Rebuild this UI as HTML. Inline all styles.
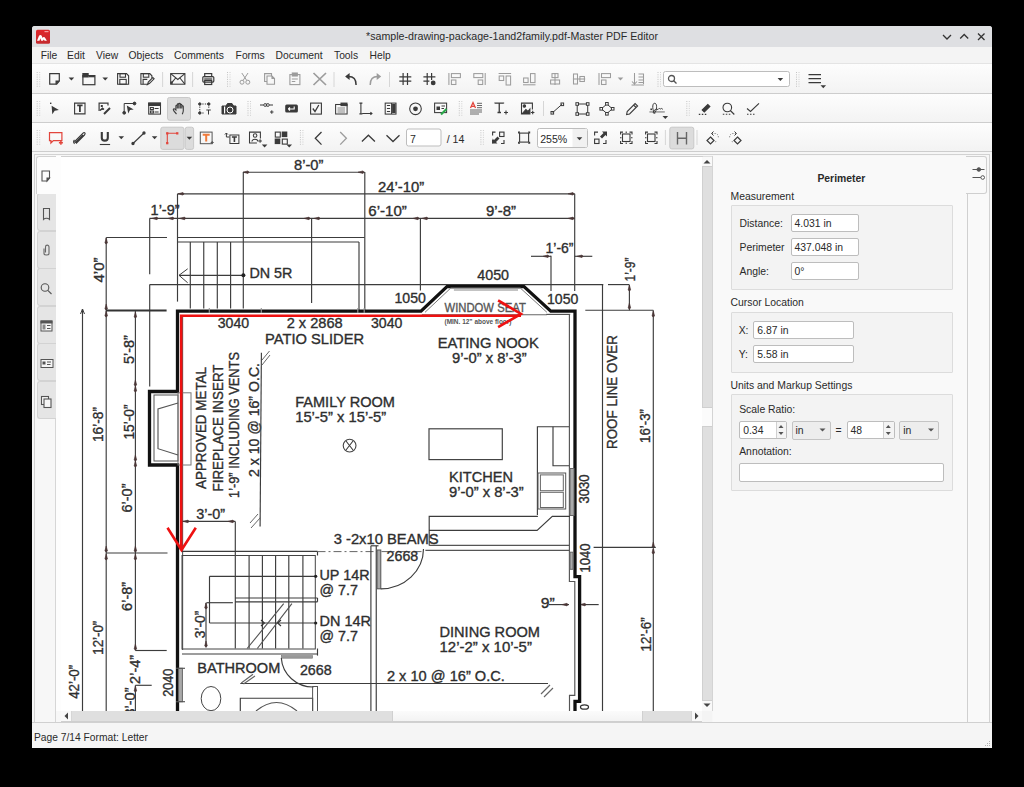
<!DOCTYPE html>
<html><head><meta charset="utf-8">
<style>
*{margin:0;padding:0;box-sizing:border-box}
html,body{width:1024px;height:787px;background:#000;overflow:hidden;font-family:"Liberation Sans",sans-serif;color:#222}
.a{position:absolute}
#win{position:absolute;left:32px;top:26px;width:960px;height:722px;background:#f4f4f4;border-radius:3px 3px 0 0;overflow:hidden}
#title{left:0;top:0;width:960px;height:21px;background:#dedfe2}
#title .t{left:0;width:960px;top:4px;text-align:center;font-size:10.65px;color:#2a2a2a}
#menu{left:0;top:21px;width:960px;height:17px;background:#f4f4f4;border-bottom:1px solid #e4e4e4}
#menu span{position:absolute;top:3px;font-size:10.3px;color:#2a2a2a}
.tb{left:0;width:960px;height:29px;background:linear-gradient(#fdfdfd,#f3f3f3);border-bottom:1px solid #cdcdcd}
#main{left:0;top:126px;width:960px;height:596px;background:#f6f6f6}
#status{left:0;top:696px;width:960px;height:26px;background:#f5f5f5;border-top:1px solid #d0d0d0}
#status span{position:absolute;left:2px;top:8.5px;font-size:10.25px;color:#2a2a2a}
.tab{position:absolute;left:5px;width:18.5px;height:38px;background:#e5e5e5;border:1px solid #d3d3d3;border-right:none;border-radius:3px 0 0 3px}
.lbl{position:absolute;font-size:10.4px;color:#2a2a2a;white-space:nowrap;margin-top:0.6px}
.inp{position:absolute;background:#fff;border:1px solid #bdbdbd;border-radius:2px;font-size:10.4px;color:#2a2a2a;padding-left:3px;padding-top:1px;line-height:15px}
.grp{position:absolute;border:1px solid #dcdcdc;background:#f3f3f3;border-radius:1px}
</style></head><body>
<div id="win">
  <div id="title" class="a"><div class="t a">*sample-drawing-package-1and2family.pdf-Master PDF Editor</div></div>
  <div id="menu" class="a">
    <span style="left:8.7px">File</span><span style="left:35.1px">Edit</span><span style="left:64px">View</span><span style="left:96.6px">Objects</span><span style="left:142px">Comments</span><span style="left:203.6px">Forms</span><span style="left:243.6px">Document</span><span style="left:302px">Tools</span><span style="left:337.5px">Help</span>
  </div>
  <div class="tb a" style="top:38px;height:30px"></div>
  <div class="tb a" style="top:68px"></div>
  <div class="tb a" style="top:97px"></div>
  <div id="main" class="a">
  </div>
  <div id="status" class="a"><span>Page 7/14 Format: Letter</span></div>
</div>
<!-- main area in screen coords -->
<div class="a" style="left:34px;top:154px;width:956px;height:568px;border:1px solid #d2d2d2;border-bottom:none;background:#f7f7f7"></div>
<!-- left tabs -->
<div class="a" style="left:56px;top:156px;width:6px;height:555px;background:#fdfdfd"></div>
<div class="tab" style="left:37px;top:193px"></div>
<div class="tab" style="left:37px;top:230.5px"></div>
<div class="tab" style="left:37px;top:268px"></div>
<div class="tab" style="left:37px;top:305.5px"></div>
<div class="tab" style="left:37px;top:343px"></div>
<div class="tab" style="left:37px;top:380.5px"></div>
<div class="a" style="left:36px;top:156px;width:20px;height:37.5px;background:#fdfdfd;border:1px solid #d2d2d2;border-right:none;border-bottom:none;border-radius:3px 0 0 0"></div>
<div class="a" style="left:55px;top:419px;width:1px;height:303px;background:#d6d6d6"></div>
<!-- page viewport -->
<div class="a" style="left:61px;top:157px;width:641px;height:554px;background:#fff;overflow:hidden">
  <svg id="plan" class="a" style="left:-61px;top:-157px" width="1024" height="787"><g font-family="Liberation Sans, sans-serif"><line x1="243.3" y1="172.2" x2="364.8" y2="172.2" stroke="#3c3c3c" stroke-width="1.15"/>
<path d="M243 172.2 L248 170.89999999999998 L249 172.2 L248 173.5Z" fill="#4a3636" stroke="#4a3636" stroke-width="0.6"/>
<path d="M358 172.2 L363 170.89999999999998 L364 172.2 L363 173.5Z" fill="#4a3636" stroke="#4a3636" stroke-width="0.6"/>
<text x="294" y="170.2" text-anchor="start" font-size="14.6" fill="#2e2e2e" stroke="#2e2e2e" stroke-width="0.35" textLength="29.4" lengthAdjust="spacingAndGlyphs">8&#8217;-0&#8221;</text>
<line x1="243.3" y1="172" x2="243.3" y2="308.6" stroke="#3c3c3c" stroke-width="1.15"/>
<line x1="364.8" y1="172" x2="364.8" y2="237.5" stroke="#3c3c3c" stroke-width="1.15"/>
<line x1="177.5" y1="193.8" x2="574.7" y2="193.8" stroke="#3c3c3c" stroke-width="1.15"/>
<path d="M178 193.8 L183 192.5 L184 193.8 L183 195.10000000000002Z" fill="#4a3636" stroke="#4a3636" stroke-width="0.6"/>
<path d="M568 193.8 L573 192.5 L574 193.8 L573 195.10000000000002Z" fill="#4a3636" stroke="#4a3636" stroke-width="0.6"/>
<text x="378" y="191.7" text-anchor="start" font-size="14.6" fill="#2e2e2e" stroke="#2e2e2e" stroke-width="0.35" textLength="46.3" lengthAdjust="spacingAndGlyphs">24&#8217;-10&#8221;</text>
<line x1="177.5" y1="193.8" x2="177.5" y2="301.6" stroke="#3c3c3c" stroke-width="1.15"/>
<line x1="574.7" y1="193.8" x2="574.7" y2="291" stroke="#3c3c3c" stroke-width="1.15"/>
<line x1="149.5" y1="218.4" x2="574.7" y2="218.4" stroke="#3c3c3c" stroke-width="1.15"/>
<path d="M152 218.4 L157 217.1 L158 218.4 L157 219.70000000000002Z" fill="#4a3636" stroke="#4a3636" stroke-width="0.6"/>
<path d="M168 218.4 L173 217.1 L174 218.4 L173 219.70000000000002Z" fill="#4a3636" stroke="#4a3636" stroke-width="0.6"/>
<path d="M179.6 218.4 L184.6 217.1 L185.6 218.4 L184.6 219.70000000000002Z" fill="#4a3636" stroke="#4a3636" stroke-width="0.6"/>
<path d="M304 218.4 L309 217.1 L310 218.4 L309 219.70000000000002Z" fill="#4a3636" stroke="#4a3636" stroke-width="0.6"/>
<path d="M314 218.4 L319 217.1 L320 218.4 L319 219.70000000000002Z" fill="#4a3636" stroke="#4a3636" stroke-width="0.6"/>
<path d="M413 218.4 L418 217.1 L419 218.4 L418 219.70000000000002Z" fill="#4a3636" stroke="#4a3636" stroke-width="0.6"/>
<path d="M422 218.4 L427 217.1 L428 218.4 L427 219.70000000000002Z" fill="#4a3636" stroke="#4a3636" stroke-width="0.6"/>
<path d="M568 218.4 L573 217.1 L574 218.4 L573 219.70000000000002Z" fill="#4a3636" stroke="#4a3636" stroke-width="0.6"/>
<text x="150.6" y="215.2" text-anchor="start" font-size="14.6" fill="#2e2e2e" stroke="#2e2e2e" stroke-width="0.35" textLength="29" lengthAdjust="spacingAndGlyphs">1&#8217;-9&#8221;</text>
<text x="368.3" y="215.5" text-anchor="start" font-size="14.6" fill="#2e2e2e" stroke="#2e2e2e" stroke-width="0.35" textLength="38.5" lengthAdjust="spacingAndGlyphs">6&#8217;-10&#8221;</text>
<text x="486" y="215.5" text-anchor="start" font-size="14.6" fill="#2e2e2e" stroke="#2e2e2e" stroke-width="0.35" textLength="30" lengthAdjust="spacingAndGlyphs">9&#8217;-8&#8221;</text>
<line x1="149.7" y1="218.4" x2="149.7" y2="274.2" stroke="#3c3c3c" stroke-width="1.15"/>
<line x1="149.7" y1="284.5" x2="149.7" y2="386.4" stroke="#3c3c3c" stroke-width="1.15"/>
<line x1="311.6" y1="218.4" x2="311.6" y2="303" stroke="#3c3c3c" stroke-width="1.15"/>
<line x1="420.4" y1="218.4" x2="420.4" y2="290.5" stroke="#3c3c3c" stroke-width="1.15"/>
<line x1="531" y1="256.3" x2="551" y2="256.3" stroke="#3c3c3c" stroke-width="1.15"/>
<line x1="574.7" y1="256.3" x2="592.3" y2="256.3" stroke="#3c3c3c" stroke-width="1.15"/>
<path d="M543 256.3 L548 255.0 L549 256.3 L548 257.6Z" fill="#4a3636" stroke="#4a3636" stroke-width="0.6"/>
<path d="M577 256.3 L582 255.0 L583 256.3 L582 257.6Z" fill="#4a3636" stroke="#4a3636" stroke-width="0.6"/>
<text x="545.5" y="253.1" text-anchor="start" font-size="14.6" fill="#2e2e2e" stroke="#2e2e2e" stroke-width="0.35" textLength="28" lengthAdjust="spacingAndGlyphs">1&#8217;-6&#8221;</text>
<line x1="551" y1="255.8" x2="551" y2="291" stroke="#3c3c3c" stroke-width="1.15"/>
<line x1="149.7" y1="284.6" x2="603.3" y2="284.6" stroke="#3c3c3c" stroke-width="1.15"/>
<line x1="608" y1="284.6" x2="629" y2="284.6" stroke="#3c3c3c" stroke-width="1.15"/>
<line x1="602.5" y1="284.6" x2="602.5" y2="711" stroke="#3c3c3c" stroke-width="1.15"/>
<line x1="629.4" y1="284.6" x2="629.4" y2="310.2" stroke="#3c3c3c" stroke-width="1.15"/>
<path d="M629.4 285 L628.1 290 L629.4 291 L630.6999999999999 290Z" fill="#4a3636" stroke="#4a3636" stroke-width="0.6"/>
<path d="M629.4 303 L628.1 308 L629.4 309 L630.6999999999999 308Z" fill="#4a3636" stroke="#4a3636" stroke-width="0.6"/>
<text transform="translate(635,269.5) rotate(-90)" text-anchor="middle" font-size="14.6" fill="#2e2e2e" stroke="#2e2e2e" stroke-width="0.35" textLength="24" lengthAdjust="spacingAndGlyphs">1&#8217;-9&#8221;</text>
<line x1="585.3" y1="310.2" x2="653.3" y2="310.2" stroke="#3c3c3c" stroke-width="1.15"/>
<line x1="653.3" y1="310.2" x2="653.3" y2="547.4" stroke="#3c3c3c" stroke-width="1.15"/>
<line x1="653.3" y1="549" x2="653.3" y2="711" stroke="#3c3c3c" stroke-width="1.15"/>
<path d="M653.3 311 L652.0 316 L653.3 317 L654.5999999999999 316Z" fill="#4a3636" stroke="#4a3636" stroke-width="0.6"/>
<path d="M653.3 542 L652.0 547 L653.3 548 L654.5999999999999 547Z" fill="#4a3636" stroke="#4a3636" stroke-width="0.6"/>
<path d="M653.3 548 L652.0 553 L653.3 554 L654.5999999999999 553Z" fill="#4a3636" stroke="#4a3636" stroke-width="0.6"/>
<line x1="593.6" y1="547.4" x2="655.8" y2="547.4" stroke="#3c3c3c" stroke-width="1.15"/>
<text transform="translate(617,392) rotate(-90)" text-anchor="middle" font-size="14.6" fill="#2e2e2e" stroke="#2e2e2e" stroke-width="0.35" textLength="114" lengthAdjust="spacingAndGlyphs">ROOF LINE OVER</text>
<text transform="translate(650.2,426) rotate(-90)" text-anchor="middle" font-size="14.6" fill="#2e2e2e" stroke="#2e2e2e" stroke-width="0.35" textLength="34" lengthAdjust="spacingAndGlyphs">16&#8217;-3&#8221;</text>
<text transform="translate(650.7,634.4) rotate(-90)" text-anchor="middle" font-size="14.6" fill="#2e2e2e" stroke="#2e2e2e" stroke-width="0.35" textLength="34" lengthAdjust="spacingAndGlyphs">12&#8217;-6&#8221;</text>
<line x1="585" y1="604.6" x2="598.7" y2="604.6" stroke="#3c3c3c" stroke-width="1.15"/>
<path d="M580 604.6 L585 603.3000000000001 L586 604.6 L585 605.9Z" fill="#4a3636" stroke="#4a3636" stroke-width="0.6"/>
<line x1="549" y1="604.6" x2="569" y2="604.6" stroke="#3c3c3c" stroke-width="1.15"/>
<path d="M562 604.6 L567 603.3000000000001 L568 604.6 L567 605.9Z" fill="#4a3636" stroke="#4a3636" stroke-width="0.6"/>
<text x="547.8" y="607.5" text-anchor="middle" font-size="14.6" fill="#2e2e2e" stroke="#2e2e2e" stroke-width="0.35" textLength="14" lengthAdjust="spacingAndGlyphs">9&#8221;</text>
<line x1="106.2" y1="237.5" x2="167" y2="237.5" stroke="#3c3c3c" stroke-width="1.15"/>
<line x1="106.2" y1="237.5" x2="106.2" y2="711" stroke="#3c3c3c" stroke-width="1.15"/>
<path d="M106.2 238 L104.9 243 L106.2 244 L107.5 243Z" fill="#4a3636" stroke="#4a3636" stroke-width="0.6"/>
<path d="M106.2 304 L104.9 309 L106.2 310 L107.5 309Z" fill="#4a3636" stroke="#4a3636" stroke-width="0.6"/>
<path d="M106.2 311 L104.9 316 L106.2 317 L107.5 316Z" fill="#4a3636" stroke="#4a3636" stroke-width="0.6"/>
<path d="M106.2 546 L104.9 551 L106.2 552 L107.5 551Z" fill="#4a3636" stroke="#4a3636" stroke-width="0.6"/>
<path d="M106.2 554 L104.9 559 L106.2 560 L107.5 559Z" fill="#4a3636" stroke="#4a3636" stroke-width="0.6"/>
<text transform="translate(104,270) rotate(-90)" text-anchor="middle" font-size="14.6" fill="#2e2e2e" stroke="#2e2e2e" stroke-width="0.35" textLength="25" lengthAdjust="spacingAndGlyphs">4&#8217;0&#8221;</text>
<line x1="106.2" y1="310.5" x2="166.6" y2="310.5" stroke="#333" stroke-width="2"/>
<line x1="82.5" y1="309" x2="82.5" y2="711" stroke="#3c3c3c" stroke-width="1.15"/>
<path d="M80.5 314 L82.5 309 L84.5 314" stroke="#3c3c3c" stroke-width="1" fill="none"/>
<line x1="135.4" y1="311" x2="135.4" y2="650.5" stroke="#3c3c3c" stroke-width="1.15"/>
<line x1="135.4" y1="685.3" x2="135.4" y2="711" stroke="#3c3c3c" stroke-width="1.15"/>
<path d="M135.4 312 L134.1 317 L135.4 318 L136.70000000000002 317Z" fill="#4a3636" stroke="#4a3636" stroke-width="0.6"/>
<path d="M135.4 380 L134.1 385 L135.4 386 L136.70000000000002 385Z" fill="#4a3636" stroke="#4a3636" stroke-width="0.6"/>
<path d="M135.4 386 L134.1 391 L135.4 392 L136.70000000000002 391Z" fill="#4a3636" stroke="#4a3636" stroke-width="0.6"/>
<path d="M135.4 455 L134.1 460 L135.4 461 L136.70000000000002 460Z" fill="#4a3636" stroke="#4a3636" stroke-width="0.6"/>
<path d="M135.4 461 L134.1 466 L135.4 467 L136.70000000000002 466Z" fill="#4a3636" stroke="#4a3636" stroke-width="0.6"/>
<path d="M135.4 546 L134.1 551 L135.4 552 L136.70000000000002 551Z" fill="#4a3636" stroke="#4a3636" stroke-width="0.6"/>
<path d="M135.4 554 L134.1 559 L135.4 560 L136.70000000000002 559Z" fill="#4a3636" stroke="#4a3636" stroke-width="0.6"/>
<path d="M135.4 644 L134.1 649 L135.4 650 L136.70000000000002 649Z" fill="#4a3636" stroke="#4a3636" stroke-width="0.6"/>
<path d="M135.4 686 L134.1 691 L135.4 692 L136.70000000000002 691Z" fill="#4a3636" stroke="#4a3636" stroke-width="0.6"/>
<line x1="106.2" y1="553" x2="167.5" y2="553" stroke="#3c3c3c" stroke-width="1.15"/>
<line x1="135.4" y1="650.5" x2="166.7" y2="650.5" stroke="#3c3c3c" stroke-width="1.15"/>
<line x1="135.4" y1="685.3" x2="151.7" y2="685.3" stroke="#3c3c3c" stroke-width="1.15"/>
<text transform="translate(133.8,349.6) rotate(-90)" text-anchor="middle" font-size="14.6" fill="#2e2e2e" stroke="#2e2e2e" stroke-width="0.35" textLength="29" lengthAdjust="spacingAndGlyphs">5&#8217;-8&#8221;</text>
<text transform="translate(133.8,422) rotate(-90)" text-anchor="middle" font-size="14.6" fill="#2e2e2e" stroke="#2e2e2e" stroke-width="0.35" textLength="35" lengthAdjust="spacingAndGlyphs">15&#8217;-0&#8221;</text>
<text transform="translate(103.2,424.5) rotate(-90)" text-anchor="middle" font-size="14.6" fill="#2e2e2e" stroke="#2e2e2e" stroke-width="0.35" textLength="35" lengthAdjust="spacingAndGlyphs">16&#8217;-8&#8221;</text>
<text transform="translate(132.2,498) rotate(-90)" text-anchor="middle" font-size="14.6" fill="#2e2e2e" stroke="#2e2e2e" stroke-width="0.35" textLength="29" lengthAdjust="spacingAndGlyphs">6&#8217;-0&#8221;</text>
<text transform="translate(132.2,596.4) rotate(-90)" text-anchor="middle" font-size="14.6" fill="#2e2e2e" stroke="#2e2e2e" stroke-width="0.35" textLength="29" lengthAdjust="spacingAndGlyphs">6&#8217;-8&#8221;</text>
<text transform="translate(102.9,637.7) rotate(-90)" text-anchor="middle" font-size="14.6" fill="#2e2e2e" stroke="#2e2e2e" stroke-width="0.35" textLength="34" lengthAdjust="spacingAndGlyphs">12&#8217;-0&#8221;</text>
<text transform="translate(78.7,681.8) rotate(-90)" text-anchor="middle" font-size="14.6" fill="#2e2e2e" stroke="#2e2e2e" stroke-width="0.35" textLength="34" lengthAdjust="spacingAndGlyphs">42&#8217;-0&#8221;</text>
<text transform="translate(139.9,669.4) rotate(-90)" text-anchor="middle" font-size="14.6" fill="#2e2e2e" stroke="#2e2e2e" stroke-width="0.35" textLength="29" lengthAdjust="spacingAndGlyphs">2&#8217;-4&#8221;</text>
<text transform="translate(134.9,702) rotate(-90)" text-anchor="middle" font-size="14.6" fill="#2e2e2e" stroke="#2e2e2e" stroke-width="0.35" textLength="29" lengthAdjust="spacingAndGlyphs">3&#8217;-0&#8221;</text>
<text transform="translate(172.6,682.8) rotate(-90)" text-anchor="middle" font-size="14.6" fill="#2e2e2e" stroke="#2e2e2e" stroke-width="0.35" textLength="28" lengthAdjust="spacingAndGlyphs">2040</text>
<line x1="177.5" y1="237.5" x2="364.8" y2="237.5" stroke="#3c3c3c" stroke-width="1.15"/>
<line x1="177.5" y1="242" x2="359" y2="242" stroke="#3c3c3c" stroke-width="1.15"/>
<line x1="359" y1="242" x2="359" y2="311" stroke="#3c3c3c" stroke-width="1.15"/>
<line x1="364.8" y1="237.5" x2="364.8" y2="311" stroke="#3c3c3c" stroke-width="1.15"/>
<line x1="190.3" y1="242" x2="190.3" y2="308.6" stroke="#3c3c3c" stroke-width="1.15"/>
<line x1="203.75" y1="242" x2="203.75" y2="308.6" stroke="#3c3c3c" stroke-width="1.15"/>
<line x1="217.3" y1="242" x2="217.3" y2="308.6" stroke="#3c3c3c" stroke-width="1.15"/>
<line x1="230.6" y1="242" x2="230.6" y2="308.6" stroke="#3c3c3c" stroke-width="1.15"/>
<line x1="179" y1="275.3" x2="243.4" y2="275.3" stroke="#3c3c3c" stroke-width="1.15"/>
<path d="M187.7 268.8 L179 275.3 L187.7 282.8" stroke="#3c3c3c" stroke-width="1" fill="none"/>
<circle cx="243.4" cy="275.3" r="2" fill="#222"/>
<text x="249.4" y="278.4" text-anchor="start" font-size="14.6" fill="#2e2e2e" stroke="#2e2e2e" stroke-width="0.35" textLength="43" lengthAdjust="spacingAndGlyphs">DN 5R</text>
<path d="M177.5 711 V465 H149.5 V391.5 H177.5 V311.2 H421 L447 286.6 H524 L550.8 311.2 H575 V576.6 H579.6 V701.3 H575 V711" stroke="#111" stroke-width="3.3" fill="none"/>
<path d="M182.6 316 V650" stroke="#555" stroke-width="1.1" fill="none"/>
<path d="M425 312.3 L450.8 288 H520.3 L546.9 312.3" stroke="#777" stroke-width="1" fill="none"/>
<line x1="453.9" y1="290" x2="518" y2="290" stroke="#888" stroke-width="1.15"/>
<line x1="421.9" y1="314.7" x2="546.9" y2="314.7" stroke="#666" stroke-width="1.15"/>
<path d="M569.4 314.4 V581.5 H574.8 V695.3 H569.5 V711" stroke="#555" stroke-width="1.15" fill="none"/>
<line x1="546.2" y1="314.4" x2="570.2" y2="314.4" stroke="#555" stroke-width="1.15"/>
<ellipse cx="584.5" cy="707" rx="4" ry="2.2" stroke="#333" stroke-width="1.3" fill="none"/>
<rect x="154" y="395" width="24" height="66" stroke="#555" stroke-width="1" fill="none"/>
<rect x="178" y="392.8" width="13" height="72.2" stroke="#777" stroke-width="1" fill="none"/>
<path d="M178 403 L158 409 V448.7 L178 455" stroke="#555" stroke-width="1.15" fill="none"/>
<rect x="570" y="468.5" width="4" height="47" stroke="#666" stroke-width="1" fill="#aaa"/>
<rect x="570" y="552.2" width="3" height="17.1" stroke="#666" stroke-width="1" fill="#aaa"/>
<rect x="178.6" y="668.3" width="3.8" height="33.4" stroke="#666" stroke-width="1" fill="#aaa"/>
<line x1="176" y1="668.3" x2="185" y2="668.3" stroke="#555" stroke-width="1.15"/>
<line x1="176" y1="701.7" x2="185" y2="701.7" stroke="#555" stroke-width="1.15"/>
<line x1="209.3" y1="308" x2="209.3" y2="313" stroke="#999" stroke-width="1.15"/>
<line x1="261.3" y1="308" x2="261.3" y2="313" stroke="#999" stroke-width="1.15"/>
<line x1="357.8" y1="308" x2="357.8" y2="313" stroke="#999" stroke-width="1.15"/>
<line x1="364.2" y1="308" x2="364.2" y2="313" stroke="#999" stroke-width="1.15"/>
<text x="217.7" y="328" text-anchor="start" font-size="14.6" fill="#2e2e2e" stroke="#2e2e2e" stroke-width="0.35" textLength="31.4" lengthAdjust="spacingAndGlyphs">3040</text>
<text x="286.7" y="328" text-anchor="start" font-size="14.6" fill="#2e2e2e" stroke="#2e2e2e" stroke-width="0.35" textLength="56" lengthAdjust="spacingAndGlyphs">2 x 2868</text>
<text x="371" y="328" text-anchor="start" font-size="14.6" fill="#2e2e2e" stroke="#2e2e2e" stroke-width="0.35" textLength="31.3" lengthAdjust="spacingAndGlyphs">3040</text>
<text x="265.1" y="343.7" text-anchor="start" font-size="14.6" fill="#2e2e2e" stroke="#2e2e2e" stroke-width="0.35" textLength="99" lengthAdjust="spacingAndGlyphs">PATIO SLIDER</text>
<text x="477.3" y="280" text-anchor="start" font-size="14.6" fill="#2e2e2e" stroke="#2e2e2e" stroke-width="0.35" textLength="31.7" lengthAdjust="spacingAndGlyphs">4050</text>
<text x="394.5" y="303.4" text-anchor="start" font-size="14.6" fill="#2e2e2e" stroke="#2e2e2e" stroke-width="0.35" textLength="31.3" lengthAdjust="spacingAndGlyphs">1050</text>
<text x="547" y="304.2" text-anchor="start" font-size="14.6" fill="#2e2e2e" stroke="#2e2e2e" stroke-width="0.35" textLength="31.3" lengthAdjust="spacingAndGlyphs">1050</text>
<text x="444.5" y="311.6" text-anchor="start" font-size="13" fill="#555" stroke="#555" stroke-width="0.35" textLength="81.3" lengthAdjust="spacingAndGlyphs">WINDOW SEAT</text>
<text x="444.5" y="323.5" text-anchor="start" font-size="7" fill="#555" stroke="#555" stroke-width="0.35" textLength="67" lengthAdjust="spacingAndGlyphs" font-weight="bold" stroke-opacity="0">(MIN. 12&#8221; above floor)</text>
<text x="437.7" y="347.5" text-anchor="start" font-size="14.6" fill="#2e2e2e" stroke="#2e2e2e" stroke-width="0.35" textLength="101.2" lengthAdjust="spacingAndGlyphs">EATING NOOK</text>
<text x="452" y="362.8" text-anchor="start" font-size="14.6" fill="#2e2e2e" stroke="#2e2e2e" stroke-width="0.35" textLength="74.7" lengthAdjust="spacingAndGlyphs">9&#8217;-0&#8221; x 8&#8217;-3&#8221;</text>
<text x="295.2" y="406.8" text-anchor="start" font-size="14.6" fill="#2e2e2e" stroke="#2e2e2e" stroke-width="0.35" textLength="99.7" lengthAdjust="spacingAndGlyphs">FAMILY ROOM</text>
<text x="295.2" y="421.8" text-anchor="start" font-size="14.6" fill="#2e2e2e" stroke="#2e2e2e" stroke-width="0.35" textLength="91" lengthAdjust="spacingAndGlyphs">15&#8217;-5&#8221; x 15&#8217;-5&#8221;</text>
<circle cx="349.6" cy="445.6" r="6.4" stroke="#444" stroke-width="1.1" fill="none"/>
<path d="M346 441 L353 450 M353 441 L346 450" stroke="#3c3c3c" stroke-width="1.1" fill="none"/>
<text transform="translate(206.3,428) rotate(-90)" text-anchor="middle" font-size="14.6" fill="#2e2e2e" stroke="#2e2e2e" stroke-width="0.35" textLength="122" lengthAdjust="spacingAndGlyphs">APPROVED METAL</text>
<text transform="translate(222.9,428) rotate(-90)" text-anchor="middle" font-size="14.6" fill="#2e2e2e" stroke="#2e2e2e" stroke-width="0.35" textLength="127" lengthAdjust="spacingAndGlyphs">FIREPLACE INSERT</text>
<text transform="translate(239.3,425) rotate(-90)" text-anchor="middle" font-size="14.6" fill="#2e2e2e" stroke="#2e2e2e" stroke-width="0.35" textLength="146" lengthAdjust="spacingAndGlyphs">1&#8217;-9&#8221; INCLUDING VENTS</text>
<text transform="translate(258.5,420) rotate(-90)" text-anchor="middle" font-size="14.6" fill="#2e2e2e" stroke="#2e2e2e" stroke-width="0.35" textLength="114" lengthAdjust="spacingAndGlyphs">2 x 10 @ 16&#8221; O.C.</text>
<line x1="261.4" y1="352.7" x2="260.1" y2="526.5" stroke="#3c3c3c" stroke-width="1.15"/>
<path d="M262 360 L269.5 351 M262 365 L270 355" stroke="#666" stroke-width="1" fill="none"/>
<path d="M250 523 L258 514 M251 528 L260.5 517.5" stroke="#666" stroke-width="1" fill="none"/>
<rect x="429" y="428.8" width="73.3" height="30.8" stroke="#444" stroke-width="1.2" fill="none"/>
<text x="449" y="481.8" text-anchor="start" font-size="14.6" fill="#2e2e2e" stroke="#2e2e2e" stroke-width="0.35" textLength="64" lengthAdjust="spacingAndGlyphs">KITCHEN</text>
<text x="449" y="496.8" text-anchor="start" font-size="14.6" fill="#2e2e2e" stroke="#2e2e2e" stroke-width="0.35" textLength="74.7" lengthAdjust="spacingAndGlyphs">9&#8217;-0&#8221; x 8&#8217;-3&#8221;</text>
<path d="M537.4 515 V426.7 H569" stroke="#3c3c3c" stroke-width="1.15" fill="none"/>
<path d="M553 426.7 V465.7 H569" stroke="#3c3c3c" stroke-width="1.15" fill="none"/>
<rect x="538" y="473" width="27.7" height="36" stroke="#555" stroke-width="1" fill="none"/>
<rect x="540.4" y="474.9" width="22.9" height="15.8" stroke="#666" stroke-width="1" fill="none"/>
<rect x="540.4" y="492.3" width="22.9" height="15.2" stroke="#666" stroke-width="1" fill="none"/>
<text transform="translate(589.2,489) rotate(-90)" text-anchor="middle" font-size="14.6" fill="#2e2e2e" stroke="#2e2e2e" stroke-width="0.35" textLength="29" lengthAdjust="spacingAndGlyphs">3030</text>
<path d="M429.2 545.6 V516.4 H537.9 M429.2 530.4 H537.1 L552.3 516.4 H570" stroke="#3c3c3c" stroke-width="1.15" fill="none"/>
<line x1="429.2" y1="545.4" x2="569.4" y2="545.4" stroke="#555" stroke-width="1.15"/>
<line x1="425.4" y1="550.3" x2="569.4" y2="550.3" stroke="#555" stroke-width="1.15"/>
<text x="333.7" y="543.6" text-anchor="start" font-size="14.6" fill="#2e2e2e" stroke="#2e2e2e" stroke-width="0.35" textLength="104.9" lengthAdjust="spacingAndGlyphs">3 -2x10 BEAMS</text>
<text transform="translate(589.7,558) rotate(-90)" text-anchor="middle" font-size="14.6" fill="#2e2e2e" stroke="#2e2e2e" stroke-width="0.35" textLength="29" lengthAdjust="spacingAndGlyphs">1040</text>
<line x1="182" y1="521.4" x2="235.3" y2="521.4" stroke="#3c3c3c" stroke-width="1.15"/>
<path d="M183 521.4 L188 520.1 L189 521.4 L188 522.6999999999999Z" fill="#4a3636" stroke="#4a3636" stroke-width="0.6"/>
<path d="M228 521.4 L233 520.1 L234 521.4 L233 522.6999999999999Z" fill="#4a3636" stroke="#4a3636" stroke-width="0.6"/>
<text x="196.3" y="519.3" text-anchor="start" font-size="14.6" fill="#2e2e2e" stroke="#2e2e2e" stroke-width="0.35" textLength="28.8" lengthAdjust="spacingAndGlyphs">3&#8217;-0&#8221;</text>
<line x1="235.3" y1="521.4" x2="235.3" y2="648.5" stroke="#3c3c3c" stroke-width="1.15"/>
<rect x="182" y="555.5" width="133.3" height="93.5" stroke="#444" stroke-width="1" fill="none"/>
<line x1="182" y1="551.3" x2="317.5" y2="551.3" stroke="#3c3c3c" stroke-width="1.15"/>
<line x1="317.5" y1="551.3" x2="317.5" y2="555.5" stroke="#3c3c3c" stroke-width="1.15"/>
<line x1="249.1" y1="556" x2="249.1" y2="648.5" stroke="#3c3c3c" stroke-width="1.15"/>
<line x1="262.4" y1="556" x2="262.4" y2="648.5" stroke="#3c3c3c" stroke-width="1.15"/>
<line x1="275.6" y1="556" x2="275.6" y2="648.5" stroke="#3c3c3c" stroke-width="1.15"/>
<line x1="288.8" y1="556" x2="288.8" y2="648.5" stroke="#3c3c3c" stroke-width="1.15"/>
<line x1="302.9" y1="556" x2="302.9" y2="648.5" stroke="#3c3c3c" stroke-width="1.15"/>
<line x1="209.5" y1="576.3" x2="317" y2="576.3" stroke="#3c3c3c" stroke-width="1.15"/>
<line x1="209.5" y1="576.3" x2="209.5" y2="623" stroke="#3c3c3c" stroke-width="1.15"/>
<line x1="209.5" y1="623" x2="315.7" y2="623" stroke="#3c3c3c" stroke-width="1.15"/>
<line x1="235" y1="598" x2="317.5" y2="598" stroke="#3c3c3c" stroke-width="1.15"/>
<line x1="235" y1="601.8" x2="317.5" y2="601.8" stroke="#3c3c3c" stroke-width="1.15"/>
<line x1="317.5" y1="598" x2="317.5" y2="601.8" stroke="#3c3c3c" stroke-width="1.15"/>
<line x1="206.4" y1="602.7" x2="232.9" y2="602.7" stroke="#3c3c3c" stroke-width="1.15"/>
<line x1="206" y1="602.7" x2="206" y2="647.4" stroke="#3c3c3c" stroke-width="1.15"/>
<path d="M206 603 L204.7 608 L206 609 L207.3 608Z" fill="#4a3636" stroke="#4a3636" stroke-width="0.6"/>
<path d="M206 641 L204.7 646 L206 647 L207.3 646Z" fill="#4a3636" stroke="#4a3636" stroke-width="0.6"/>
<text transform="translate(204.5,624.5) rotate(-90)" text-anchor="middle" font-size="14.6" fill="#2e2e2e" stroke="#2e2e2e" stroke-width="0.35" textLength="27.5" lengthAdjust="spacingAndGlyphs">3&#8217;-0&#8221;</text>
<path d="M247.1 648.5 L283.7 603.7 M257.3 648.5 L291.9 603.7" stroke="#555" stroke-width="1.15" fill="none"/>
<path d="M261 620 L264.4 623 L261 626 M281 620 L277.6 623 L281 626" stroke="#333" stroke-width="1.15" fill="none"/>
<circle cx="315.7" cy="576.3" r="1.6" fill="#222"/><circle cx="315.7" cy="623" r="1.6" fill="#222"/>
<text x="319.5" y="580" text-anchor="start" font-size="14.6" fill="#2e2e2e" stroke="#2e2e2e" stroke-width="0.35" textLength="50" lengthAdjust="spacingAndGlyphs">UP 14R</text>
<text x="319.5" y="594.9" text-anchor="start" font-size="14.6" fill="#2e2e2e" stroke="#2e2e2e" stroke-width="0.35" textLength="38.5" lengthAdjust="spacingAndGlyphs">@ 7.7</text>
<text x="319.5" y="626.2" text-anchor="start" font-size="14.6" fill="#2e2e2e" stroke="#2e2e2e" stroke-width="0.35" textLength="51.4" lengthAdjust="spacingAndGlyphs">DN 14R</text>
<text x="319.5" y="640.6" text-anchor="start" font-size="14.6" fill="#2e2e2e" stroke="#2e2e2e" stroke-width="0.35" textLength="38.5" lengthAdjust="spacingAndGlyphs">@ 7.7</text>
<line x1="317.5" y1="551.6" x2="424.3" y2="551.6" stroke="#666" stroke-width="1" stroke-dasharray="8,3,2,3"/>
<line x1="370.9" y1="545.8" x2="370.9" y2="711" stroke="#3c3c3c" stroke-width="1.15"/>
<line x1="376.25" y1="545.8" x2="376.25" y2="711" stroke="#3c3c3c" stroke-width="1.15"/>
<line x1="370.9" y1="545.8" x2="378.5" y2="545.8" stroke="#3c3c3c" stroke-width="1.15"/>
<rect x="377" y="550" width="3.8" height="38.8" stroke="#555" stroke-width="1" fill="#aaa"/>
<path d="M380.8 588.8 A 43 40 0 0 0 423.5 549" stroke="#3c3c3c" stroke-width="1.15" fill="none"/>
<text x="386.6" y="561.4" text-anchor="start" font-size="14.6" fill="#2e2e2e" stroke="#2e2e2e" stroke-width="0.35" textLength="31.6" lengthAdjust="spacingAndGlyphs">2668</text>
<text x="439.5" y="637" text-anchor="start" font-size="14.6" fill="#2e2e2e" stroke="#2e2e2e" stroke-width="0.35" textLength="100.5" lengthAdjust="spacingAndGlyphs">DINING ROOM</text>
<text x="439.5" y="651.6" text-anchor="start" font-size="14.6" fill="#2e2e2e" stroke="#2e2e2e" stroke-width="0.35" textLength="92.4" lengthAdjust="spacingAndGlyphs">12&#8217;-2&#8221; x 10&#8217;-5&#8221;</text>
<text x="386.9" y="681.2" text-anchor="start" font-size="14.6" fill="#2e2e2e" stroke="#2e2e2e" stroke-width="0.35" textLength="118" lengthAdjust="spacingAndGlyphs">2 x 10 @ 16&#8221; O.C.</text>
<line x1="240.3" y1="683.5" x2="548" y2="683.5" stroke="#3c3c3c" stroke-width="1.15"/>
<path d="M541 694 L550 685 M544 697 L553 688" stroke="#666" stroke-width="1.15" fill="none"/>
<line x1="182" y1="654" x2="317.5" y2="654" stroke="#3c3c3c" stroke-width="1.15"/>
<line x1="317.5" y1="648.5" x2="317.5" y2="655.6" stroke="#3c3c3c" stroke-width="1.15"/>
<rect x="281.3" y="655.6" width="31.3" height="2.6" stroke="#777" stroke-width="0.6" fill="#999"/>
<text x="197.3" y="673.2" text-anchor="start" font-size="14.6" fill="#2e2e2e" stroke="#2e2e2e" stroke-width="0.35" textLength="83" lengthAdjust="spacingAndGlyphs">BATHROOM</text>
<path d="M281.3 658 A 32 31 0 0 0 313.5 687" stroke="#3c3c3c" stroke-width="1.15" fill="none"/>
<text x="299.9" y="674.8" text-anchor="start" font-size="14.6" fill="#2e2e2e" stroke="#2e2e2e" stroke-width="0.35" textLength="31.8" lengthAdjust="spacingAndGlyphs">2668</text>
<path d="M241.3 683 L253 674.2 M243.5 684 L255 676" stroke="#666" stroke-width="1.15" fill="none"/>
<ellipse cx="211" cy="698.6" rx="9.8" ry="12.1" stroke="#444" stroke-width="1" fill="none"/>
<path d="M240.3 711 V698.2 H312.6 V711" stroke="#3c3c3c" stroke-width="1.15" fill="none"/>
<path d="M256 711 Q 276.5 694 297 711" stroke="#555" stroke-width="1.15" fill="none"/>
<rect x="312.6" y="686.5" width="4.9" height="30" stroke="#555" stroke-width="1" fill="none"/>
<path d="M181.2 550 V315.7 H521" stroke="#ee1111" stroke-width="2.6" fill="none"/>
<path d="M498.1 300.3 L521 313.9 L498.1 327.2" stroke="#ee1111" stroke-width="2.6" fill="none"/>
<path d="M167.5 527.8 L181.5 550 L195.8 527.8" stroke="#ee1111" stroke-width="2.6" fill="none"/>
</g></svg>
</div>
<div class="a" style="left:61px;top:156px;width:641px;height:1px;background:#cfcfcf"></div>
<!-- vertical scrollbar -->
<div class="a" style="left:701.5px;top:156px;width:11px;height:555px;background:#dfdfdf;border-left:1px solid #d0d0d0;border-right:1px solid #d4d4d4"></div>
<div class="a" style="left:702px;top:157px;width:10px;height:10px;background:#f9f9f9;border-bottom:1px solid #cfcfcf"></div>
<div class="a" style="left:702px;top:407px;width:10px;height:20px;background:#fbfbfb;border-top:1px solid #cfcfcf;border-bottom:1px solid #cfcfcf"></div>
<div class="a" style="left:702px;top:700px;width:10px;height:11px;background:#f9f9f9;border-top:1px solid #cfcfcf"></div>
<svg class="a" style="left:0;top:0" width="1024" height="787">
  <path d="M703.5 163.5 L707 160 L710.5 163.5Z" fill="#444"/>
  <path d="M703.5 703.5 L707 707 L710.5 703.5Z" fill="#444"/>
</svg>
<!-- horizontal scrollbar -->
<div class="a" style="left:61px;top:711px;width:641px;height:10.5px;background:#dfdfdf;border-bottom:1px solid #cfcfcf"></div>
<div class="a" style="left:61px;top:711px;width:11px;height:10px;background:#f9f9f9;border-right:1px solid #d6d6d6"></div>
<div class="a" style="left:391.5px;top:711px;width:251.5px;height:10px;background:linear-gradient(#fbfbfb,#f3f3f3);border-left:1px solid #d0d0d0;border-right:1px solid #d0d0d0"></div>
<div class="a" style="left:690.5px;top:711px;width:11px;height:10px;background:#f9f9f9;border-left:1px solid #d6d6d6"></div>
<div class="a" style="left:702px;top:711px;width:10px;height:10.5px;background:#f4f4f4"></div>
<svg class="a" style="left:0;top:0" width="1024" height="787">
  <path d="M64.5 716 L68 712.5 L68 719.5Z" fill="#444"/>
  <path d="M698.5 716 L695 712.5 L695 719.5Z" fill="#444"/>
</svg>
<!-- right panel -->
<div class="a" style="left:713px;top:156px;width:255px;height:566px;background:#f9f9f9"></div>
<div class="a" style="left:967px;top:193px;width:22px;height:529px;background:#f9f9f9;border-left:1px solid #d0d0d0"></div>
<div class="a" style="left:966px;top:156px;width:21px;height:38px;background:#f9f9f9;border:1px solid #cfcfcf;border-left:none;border-bottom:1px solid #cfcfcf;border-radius:0 3px 3px 0"></div>
<svg class="a" style="left:0;top:0" width="1024" height="787">
  <g stroke="#555" stroke-width="1" fill="none">
    <path d="M972.5 169.5 H984.5"/><circle cx="978.8" cy="169.5" r="1.8" fill="#555"/>
    <path d="M972.5 177.5 H981"/><circle cx="982.7" cy="177.5" r="1.8" fill="#fff"/>
  </g>
</svg>
<div class="lbl" style="left:817.4px;top:172px;font-weight:bold;font-size:10.4px">Perimeter</div>
<div class="lbl" style="left:730.5px;top:190.5px">Measurement</div>
<div class="grp" style="left:731px;top:205px;width:222px;height:85px"></div>
<div class="lbl" style="left:739.5px;top:217.5px">Distance:</div>
<div class="inp" style="left:790.5px;top:214px;width:68.5px;height:18px">4.031 in</div>
<div class="lbl" style="left:739.5px;top:241.5px">Perimeter</div>
<div class="inp" style="left:790.5px;top:238px;width:68.5px;height:18px">437.048 in</div>
<div class="lbl" style="left:739.5px;top:265.5px">Angle:</div>
<div class="inp" style="left:790.5px;top:262px;width:68.5px;height:18px">0°</div>
<div class="lbl" style="left:730.5px;top:296.5px">Cursor Location</div>
<div class="grp" style="left:731px;top:311.5px;width:222px;height:61px"></div>
<div class="lbl" style="left:738.7px;top:324px">X:</div>
<div class="inp" style="left:753.3px;top:321px;width:100.5px;height:18px">6.87 in</div>
<div class="lbl" style="left:738.7px;top:348.5px">Y:</div>
<div class="inp" style="left:753.3px;top:345px;width:100.5px;height:18px">5.58 in</div>
<div class="lbl" style="left:730.5px;top:379px">Units and Markup Settings</div>
<div class="grp" style="left:731px;top:394px;width:222px;height:96.5px"></div>
<div class="lbl" style="left:739.2px;top:403.5px">Scale Ratio:</div>
<div class="inp" style="left:739.2px;top:421px;width:47.6px;height:18px">0.34</div>
<div class="a" style="left:775.5px;top:422px;width:10.5px;height:16px;border-left:1px solid #d0d0d0;background:#f4f4f4"></div>
<div class="inp" style="left:791.5px;top:420.5px;width:39.5px;height:19px;background:#ededed;border-color:#c4c4c4;line-height:16px;padding-top:1.5px">in</div>
<div class="lbl" style="left:835.5px;top:424px">=</div>
<div class="inp" style="left:846.6px;top:421px;width:48px;height:18px">48</div>
<div class="a" style="left:883px;top:422px;width:10.5px;height:16px;border-left:1px solid #d0d0d0;background:#f4f4f4"></div>
<div class="inp" style="left:899.3px;top:420.5px;width:39.5px;height:19px;background:#ededed;border-color:#c4c4c4;line-height:16px;padding-top:1.5px">in</div>
<div class="lbl" style="left:739.2px;top:445px">Annotation:</div>
<div class="inp" style="left:739.2px;top:462.5px;width:204.6px;height:19px"></div>
<svg class="a" style="left:0;top:0" width="1024" height="787">
  <g fill="#555">
    <path d="M778.5 428 L781 425 L783.5 428Z"/><path d="M778.5 432 L781 435 L783.5 432Z"/>
    <path d="M885.8 428 L888.3 425 L890.8 428Z"/><path d="M885.8 432 L888.3 435 L890.8 432Z"/>
    <path d="M819.5 428.5 L822.5 431.5 L825.5 428.5Z"/>
    <path d="M928 428.5 L931 431.5 L934 428.5Z"/>
  </g>
</svg>
<svg id="icons" class="a" style="left:0;top:0" width="1024" height="787"><rect x="36.7" y="72" width="1" height="1" fill="#c4c4c4"/><rect x="39.2" y="72" width="1" height="1" fill="#d0d0d0"/>
<rect x="36.7" y="74.3" width="1" height="1" fill="#c4c4c4"/><rect x="39.2" y="74.3" width="1" height="1" fill="#d0d0d0"/>
<rect x="36.7" y="76.6" width="1" height="1" fill="#c4c4c4"/><rect x="39.2" y="76.6" width="1" height="1" fill="#d0d0d0"/>
<rect x="36.7" y="78.89999999999999" width="1" height="1" fill="#c4c4c4"/><rect x="39.2" y="78.89999999999999" width="1" height="1" fill="#d0d0d0"/>
<rect x="36.7" y="81.19999999999999" width="1" height="1" fill="#c4c4c4"/><rect x="39.2" y="81.19999999999999" width="1" height="1" fill="#d0d0d0"/>
<rect x="36.7" y="83.49999999999999" width="1" height="1" fill="#c4c4c4"/><rect x="39.2" y="83.49999999999999" width="1" height="1" fill="#d0d0d0"/>
<rect x="36.7" y="85.79999999999998" width="1" height="1" fill="#c4c4c4"/><rect x="39.2" y="85.79999999999998" width="1" height="1" fill="#d0d0d0"/>
<g transform="translate(49.1,73)" stroke="#3a3a3a" stroke-width="1.2" fill="none"><path d="M0.6 0.6 H10.2 V8 L7.6 11.2 H0.6Z"/><path d="M10.2 8 L7 8 V11.2" fill="#3a3a3a"/></g>
<path d="M68.60000000000001 77.6 H74.2 L71.4 80.6Z" fill="#3a3a3a"/>
<g transform="translate(82.3,73)" stroke="#3a3a3a" stroke-width="1.2" fill="none"><rect x="0.6" y="2.6" width="12" height="9.1" /><rect x="0" y="0" width="6.4" height="4.5" fill="#3a3a3a" stroke="none"/><path d="M6.4 3.4 H12.6" stroke-width="1.8"/></g>
<path d="M102.4 77.6 H108.0 L105.2 80.6Z" fill="#3a3a3a"/>
<g transform="translate(117,73)" stroke="#3a3a3a" stroke-width="1.1" fill="none"><path d="M0.6 0.6 H9.5 L11.6 2.8 V11.2 H0.6Z"/><rect x="3" y="0.6" width="5.5" height="3.6"/><rect x="2.8" y="6.4" width="6.4" height="4.8"/></g>
<g transform="translate(140.3,73)" stroke="#3a3a3a" stroke-width="1.1" fill="none"><path d="M7 11.2 H0.6 V0.6 H9.5 L11.6 2.8 V5"/><rect x="3" y="0.6" width="5.5" height="3.6"/><path d="M2.8 11.2 V6.4 H7"/><path d="M7.2 11.5 L8 9 L12.5 4.5 L13.8 5.8 L9.3 10.3Z"/></g>
<line x1="162.6" y1="72" x2="162.6" y2="87" stroke="#d6d6d6" stroke-width="1"/>
<g transform="translate(170.1,73)" stroke="#3a3a3a" stroke-width="1.05" fill="none"><rect x="0.6" y="0.6" width="14.2" height="10.6"/><path d="M0.6 0.6 L7.7 6.5 L14.8 0.6 M0.6 11.2 L5.5 5 M14.8 11.2 L9.8 5"/><path d="M0 9.5 L2.5 7.5 V11.5Z" fill="#3a3a3a" stroke="none"/></g>
<line x1="192.6" y1="72" x2="192.6" y2="87" stroke="#d6d6d6" stroke-width="1"/>
<g transform="translate(202.2,73)" stroke="#3a3a3a" stroke-width="1.2" fill="none"><rect x="2.5" y="0.6" width="7" height="3"/><rect x="0.6" y="3.6" width="11" height="5.5" rx="1"/><rect x="2.5" y="7.5" width="7" height="4"/><line x1="2" y1="6" x2="10" y2="6"/></g>
<rect x="227.0" y="72" width="1" height="1" fill="#c4c4c4"/><rect x="229.5" y="72" width="1" height="1" fill="#d0d0d0"/>
<rect x="227.0" y="74.3" width="1" height="1" fill="#c4c4c4"/><rect x="229.5" y="74.3" width="1" height="1" fill="#d0d0d0"/>
<rect x="227.0" y="76.6" width="1" height="1" fill="#c4c4c4"/><rect x="229.5" y="76.6" width="1" height="1" fill="#d0d0d0"/>
<rect x="227.0" y="78.89999999999999" width="1" height="1" fill="#c4c4c4"/><rect x="229.5" y="78.89999999999999" width="1" height="1" fill="#d0d0d0"/>
<rect x="227.0" y="81.19999999999999" width="1" height="1" fill="#c4c4c4"/><rect x="229.5" y="81.19999999999999" width="1" height="1" fill="#d0d0d0"/>
<rect x="227.0" y="83.49999999999999" width="1" height="1" fill="#c4c4c4"/><rect x="229.5" y="83.49999999999999" width="1" height="1" fill="#d0d0d0"/>
<rect x="227.0" y="85.79999999999998" width="1" height="1" fill="#c4c4c4"/><rect x="229.5" y="85.79999999999998" width="1" height="1" fill="#d0d0d0"/>
<g transform="translate(239.5,73)" stroke="#9c9c9c" stroke-width="1" fill="none"><circle cx="2.5" cy="9.2" r="2"/><circle cx="8.3" cy="9.2" r="2"/><path d="M3.6 7.4 L8.5 0 M7.2 7.4 L2.3 0"/></g>
<g transform="translate(264,73)" stroke="#9c9c9c" stroke-width="1.1" fill="none"><path d="M3 3 H8 L10.5 5.5 V11.2 H3Z"/><path d="M3 8.5 H0.6 V0.6 H7.5 V3"/><path d="M8 3 V5.5 H10.5" fill="#9c9c9c"/></g>
<g transform="translate(289.3,73)" stroke="#9c9c9c" stroke-width="1.1" fill="none"><rect x="0.6" y="1.6" width="10" height="10"/><rect x="3" y="0" width="5" height="3" fill="#9c9c9c"/><path d="M2.5 6 H8.5 M2.5 8.5 H6"/></g>
<g transform="translate(313,73)" stroke="#9c9c9c" stroke-width="1.7" fill="none"><path d="M0.5 0 L13 12 M13 0 L0.5 12"/></g>
<line x1="334" y1="72" x2="334" y2="87" stroke="#d6d6d6" stroke-width="1"/>
<g transform="translate(344.6,73)" stroke="#3a3a3a" stroke-width="1.5" fill="none"><path d="M11.5 12 C11.5 6 9 3.6 4 3.6"/><path d="M5 0 L0.5 3.6 L5 7Z" fill="#3a3a3a" stroke="none"/></g>
<g transform="translate(369.4,73)" stroke="#9c9c9c" stroke-width="1.5" fill="none"><path d="M0.8 12 C0.8 6 3.3 3.6 8.3 3.6"/><path d="M7.3 0 L11.8 3.6 L7.3 7Z" fill="#9c9c9c" stroke="none"/></g>
<line x1="389.5" y1="72" x2="389.5" y2="87" stroke="#d6d6d6" stroke-width="1"/>
<g transform="translate(399.3,73)" stroke="#3a3a3a" stroke-width="1.2" fill="none"><path d="M3.8 0 V12 M8.2 0 V12 M0 3.8 H12 M0 8.2 H12"/></g>
<g transform="translate(423.4,73)" stroke="#3a3a3a" stroke-width="1.2" fill="none"><path d="M3.8 0 V12 M8.2 0 V7 M0 3.8 H12 M0 8.2 H6"/><circle cx="9.8" cy="9.9" r="2.4" fill="#3a3a3a" stroke="none"/></g>
<g transform="translate(448.4,73)" stroke="#9c9c9c" stroke-width="1.05" fill="none"><path d="M0.5 0 V12"/><rect x="3" y="0.6" width="9" height="4"/><rect x="3" y="7" width="4.5" height="4.5"/></g>
<g transform="translate(473.2,73)" stroke="#9c9c9c" stroke-width="1.05" fill="none"><path d="M12 0 V12"/><rect x="0.6" y="0.6" width="9" height="4"/><rect x="5" y="7" width="4.5" height="4.5"/></g>
<g transform="translate(498.6,73)" stroke="#9c9c9c" stroke-width="1.05" fill="none"><path d="M0 0.5 H12.5"/><rect x="0.6" y="3" width="4.5" height="4.5"/><rect x="7.5" y="3" width="4.5" height="9"/></g>
<g transform="translate(523,73)" stroke="#9c9c9c" stroke-width="1.05" fill="none"><path d="M0 11.8 H12.5"/><rect x="0.6" y="5" width="4.5" height="4.5"/><rect x="7.5" y="0.6" width="4.5" height="9"/></g>
<g transform="translate(550,73)" stroke="#9c9c9c" stroke-width="1.05" fill="none"><path d="M5 0 V12"/><rect x="2" y="0.6" width="6" height="4"/><rect x="0.6" y="7" width="9" height="4"/></g>
<g transform="translate(572.9,73)" stroke="#9c9c9c" stroke-width="1.05" fill="none"><path d="M0 6 H12.3"/><rect x="0.6" y="1" width="4" height="10"/><rect x="7" y="3.5" width="4.5" height="5"/></g>
<g transform="translate(598.5,73)" stroke="#9c9c9c" stroke-width="1.05" fill="none"><path d="M0.5 0 V12"/><rect x="3" y="0.6" width="9" height="4"/><rect x="3" y="7" width="4.5" height="4.5"/></g>
<path d="M617.7 77.6 H623.3 L620.5 80.6Z" fill="#9c9c9c"/>
<g transform="translate(631.5,73)" stroke="#9c9c9c" stroke-width="1.05" fill="none"><path d="M3 0 V11 M0.5 8.5 L3 11 L5.5 8.5 M0 12 H12.5 M7 1 H12.5 M7 4 H12.5 M7 7 H12.5 M7 9.5 H12.5 M12 0.6 V11"/></g>
<rect x="657.5" y="72" width="1" height="1" fill="#c4c4c4"/><rect x="660" y="72" width="1" height="1" fill="#d0d0d0"/>
<rect x="657.5" y="74.3" width="1" height="1" fill="#c4c4c4"/><rect x="660" y="74.3" width="1" height="1" fill="#d0d0d0"/>
<rect x="657.5" y="76.6" width="1" height="1" fill="#c4c4c4"/><rect x="660" y="76.6" width="1" height="1" fill="#d0d0d0"/>
<rect x="657.5" y="78.89999999999999" width="1" height="1" fill="#c4c4c4"/><rect x="660" y="78.89999999999999" width="1" height="1" fill="#d0d0d0"/>
<rect x="657.5" y="81.19999999999999" width="1" height="1" fill="#c4c4c4"/><rect x="660" y="81.19999999999999" width="1" height="1" fill="#d0d0d0"/>
<rect x="657.5" y="83.49999999999999" width="1" height="1" fill="#c4c4c4"/><rect x="660" y="83.49999999999999" width="1" height="1" fill="#d0d0d0"/>
<rect x="657.5" y="85.79999999999998" width="1" height="1" fill="#c4c4c4"/><rect x="660" y="85.79999999999998" width="1" height="1" fill="#d0d0d0"/>
<rect x="663.5" y="71.5" width="126" height="15" rx="2" fill="#fff" stroke="#bdbdbd"/>
<g transform="translate(667.5,74.5)" stroke="#555" stroke-width="1.3" fill="none"><circle cx="4" cy="4" r="3"/><path d="M6.2 6.2 L9 9"/></g>
<path d="M777.6 78 H783.1999999999999 L780.4 81Z" fill="#3a3a3a"/>
<rect x="796.0" y="72" width="1" height="1" fill="#c4c4c4"/><rect x="798.5" y="72" width="1" height="1" fill="#d0d0d0"/>
<rect x="796.0" y="74.3" width="1" height="1" fill="#c4c4c4"/><rect x="798.5" y="74.3" width="1" height="1" fill="#d0d0d0"/>
<rect x="796.0" y="76.6" width="1" height="1" fill="#c4c4c4"/><rect x="798.5" y="76.6" width="1" height="1" fill="#d0d0d0"/>
<rect x="796.0" y="78.89999999999999" width="1" height="1" fill="#c4c4c4"/><rect x="798.5" y="78.89999999999999" width="1" height="1" fill="#d0d0d0"/>
<rect x="796.0" y="81.19999999999999" width="1" height="1" fill="#c4c4c4"/><rect x="798.5" y="81.19999999999999" width="1" height="1" fill="#d0d0d0"/>
<rect x="796.0" y="83.49999999999999" width="1" height="1" fill="#c4c4c4"/><rect x="798.5" y="83.49999999999999" width="1" height="1" fill="#d0d0d0"/>
<rect x="796.0" y="85.79999999999998" width="1" height="1" fill="#c4c4c4"/><rect x="798.5" y="85.79999999999998" width="1" height="1" fill="#d0d0d0"/>
<g transform="translate(808.5,74)" stroke="#3a3a3a" stroke-width="1.2" fill="none"><path d="M0 0.6 H12.5 M0 4.6 H12.5 M0 8.6 H12.5"/></g>
<path d="M820.5 85.2 H826.0999999999999 L823.3 88.2Z" fill="#3a3a3a"/>
<rect x="36.7" y="101" width="1" height="1" fill="#c4c4c4"/><rect x="39.2" y="101" width="1" height="1" fill="#d0d0d0"/>
<rect x="36.7" y="103.3" width="1" height="1" fill="#c4c4c4"/><rect x="39.2" y="103.3" width="1" height="1" fill="#d0d0d0"/>
<rect x="36.7" y="105.6" width="1" height="1" fill="#c4c4c4"/><rect x="39.2" y="105.6" width="1" height="1" fill="#d0d0d0"/>
<rect x="36.7" y="107.89999999999999" width="1" height="1" fill="#c4c4c4"/><rect x="39.2" y="107.89999999999999" width="1" height="1" fill="#d0d0d0"/>
<rect x="36.7" y="110.19999999999999" width="1" height="1" fill="#c4c4c4"/><rect x="39.2" y="110.19999999999999" width="1" height="1" fill="#d0d0d0"/>
<rect x="36.7" y="112.49999999999999" width="1" height="1" fill="#c4c4c4"/><rect x="39.2" y="112.49999999999999" width="1" height="1" fill="#d0d0d0"/>
<rect x="36.7" y="114.79999999999998" width="1" height="1" fill="#c4c4c4"/><rect x="39.2" y="114.79999999999998" width="1" height="1" fill="#d0d0d0"/>
<path d="M51.6 105.7 L58.9 110 L54.7 110.7 L52.3 114.2Z" fill="#3a3a3a"/><rect x="50" y="102.6" width="1.4" height="1.4" fill="#3a3a3a"/>
<g transform="translate(74,102.5)" stroke="#3a3a3a" stroke-width="1.1" fill="none"><path d="M0.6 0 V12 M11 0 V12 M0 0.6 H11.6 M0 11.4 H11.6"/><path d="M3.2 2.8 H8.6 M5.9 2.8 V9.5" stroke-width="1.8"/></g>
<g transform="translate(98.5,102.5)" stroke="#3a3a3a" stroke-width="1.2" fill="none"><path d="M0.6 8.5 V0.6 H9.5 V3"/><rect x="2.3" y="2.5" width="2" height="2" fill="#3a3a3a" stroke="none"/><path d="M1.5 8 L4 5.5 L5.5 7" fill="#3a3a3a"/><path d="M5.5 11.5 L11.5 5.5" stroke-width="2"/></g>
<g transform="translate(123.2,102.5)" stroke="#3a3a3a" stroke-width="1" fill="none"><path d="M1 1 V10 M1 1 H11"/><circle cx="1" cy="10.3" r="1.4" fill="#3a3a3a"/><circle cx="11.3" cy="1" r="1.4" fill="#3a3a3a"/><path d="M3.6 3 L10.5 7 L6.8 7.6 L5 11Z" fill="#3a3a3a" stroke="none"/></g>
<g transform="translate(148.1,102.5)" stroke="#3a3a3a" stroke-width="1.05" fill="none"><rect x="0.6" y="0.6" width="11.8" height="11"/><rect x="0.6" y="0.6" width="11.8" height="2.4" fill="#3a3a3a"/><rect x="2.3" y="5" width="3" height="2"/><rect x="2.3" y="8.5" width="3" height="2"/><path d="M6.5 6 H10.5 M6.5 9.5 H10.5"/></g>
<rect x="167.5" y="97.5" width="23" height="22.7" rx="2" fill="#dcdcdc" stroke="#c9c9c9"/>
<g transform="translate(172.7,103)" stroke="#3a3a3a" stroke-width="1.1" fill="none"><path d="M3.8 11 C2.8 10 0.6 7.8 0.6 6.6 C0.6 5.6 1.6 5.5 2.5 6.4 L3.2 7 V3 C3.2 2 4.6 2 4.6 3 V5.5 V1.6 C4.6 0.6 6.1 0.6 6.1 1.6 V5.5 V1.1 C6.1 0.1 7.6 0.1 7.6 1.1 V5.5 V2 C7.6 1 9.1 1 9.1 2 V5.5 V3.6 C9.1 2.6 10.6 2.6 10.6 3.6 V7.5 C10.6 9 10.1 10 9.6 11.2"/></g>
<g transform="translate(198.3,102.5)" stroke="#3a3a3a" stroke-width="1" fill="none"><path d="M1.5 1.5 H10.5 M1.5 1.5 V10.5 M10.5 1.5 V6 M1.5 10.5 H6" stroke-dasharray="1.3,1.2"/><circle cx="1.5" cy="1.5" r="1.2" fill="#3a3a3a"/><circle cx="10.5" cy="1.5" r="1.2" fill="#3a3a3a"/><circle cx="1.5" cy="10.5" r="1.2" fill="#3a3a3a"/><path d="M8 7.5 H12.5 M10.2 7.5 V12"/></g>
<g transform="translate(222,103.5)" stroke="#3a3a3a" stroke-width="1" fill="none"><path d="M0 2.5 H14 V10.5 H0Z M4 2.5 L5.5 0 H10 L11.5 2.5" fill="#3a3a3a"/><circle cx="8" cy="6.5" r="3" stroke="#fff" fill="#3a3a3a"/><rect x="2" y="3" width="1.2" height="7" fill="#fff" stroke="none"/></g>
<rect x="247.5" y="101" width="1" height="1" fill="#c4c4c4"/><rect x="250" y="101" width="1" height="1" fill="#d0d0d0"/>
<rect x="247.5" y="103.3" width="1" height="1" fill="#c4c4c4"/><rect x="250" y="103.3" width="1" height="1" fill="#d0d0d0"/>
<rect x="247.5" y="105.6" width="1" height="1" fill="#c4c4c4"/><rect x="250" y="105.6" width="1" height="1" fill="#d0d0d0"/>
<rect x="247.5" y="107.89999999999999" width="1" height="1" fill="#c4c4c4"/><rect x="250" y="107.89999999999999" width="1" height="1" fill="#d0d0d0"/>
<rect x="247.5" y="110.19999999999999" width="1" height="1" fill="#c4c4c4"/><rect x="250" y="110.19999999999999" width="1" height="1" fill="#d0d0d0"/>
<rect x="247.5" y="112.49999999999999" width="1" height="1" fill="#c4c4c4"/><rect x="250" y="112.49999999999999" width="1" height="1" fill="#d0d0d0"/>
<rect x="247.5" y="114.79999999999998" width="1" height="1" fill="#c4c4c4"/><rect x="250" y="114.79999999999998" width="1" height="1" fill="#d0d0d0"/>
<g transform="translate(260,102.5)" stroke="#3a3a3a" stroke-width="1" fill="none"><path d="M0 2.5 H3 M10 2.5 H13 M3.5 2.5 A1.8 1.8 0 0 1 7 2.5 A1.8 1.8 0 0 1 3.5 2.5 M6 2.5 A1.8 1.8 0 0 1 9.5 2.5 A1.8 1.8 0 0 1 6 2.5"/><path d="M10 9.5 H13.5 M11.8 7.8 V11.3"/></g>
<g transform="translate(285.2,104.5)" stroke="#3a3a3a" stroke-width="1.2" fill="none"><rect x="0" y="0" width="12.7" height="8" rx="1.5" fill="#3a3a3a" stroke="none"/><path d="M3 4.5 H9 V2 M3 4.5 L4.8 3 M3 4.5 L4.8 6" stroke="#fff" stroke-width="1.1"/></g>
<g transform="translate(310,102.5)" stroke="#3a3a3a" stroke-width="1.1" fill="none"><rect x="0.6" y="0.6" width="10.8" height="11"/><path d="M2.8 6 L5 9 L8.8 2.5" stroke-width="1.3"/></g>
<g transform="translate(335,102.5)" stroke="#3a3a3a" stroke-width="1.05" fill="none"><rect x="0.6" y="2" width="11.5" height="9.5"/><rect x="6" y="0.6" width="6" height="2.5" fill="#3a3a3a"/><path d="M2.5 5.5 H10 M2.5 7.5 H10 M2.5 9.5 H10" stroke="#888"/></g>
<g transform="translate(359.4,102.5)" stroke="#3a3a3a" stroke-width="1.1" fill="none"><path d="M0 0.6 H3 M1.5 0.6 V11.4 M0 11.4 H3 M3 11 H12.5"/><path d="M11 9.8 L12.5 11 L11 12.2"/></g>
<g transform="translate(384.6,102.5)" stroke="#3a3a3a" stroke-width="1.05" fill="none"><rect x="0.6" y="0.6" width="10.8" height="11"/><path d="M7 0.6 V11.6"/><rect x="7.5" y="1.5" width="3.5" height="9" fill="#3a3a3a" stroke="none"/><path d="M2.3 3 H5.5 M2.3 6 H5.5 M2.3 9 H5.5"/></g>
<g transform="translate(409,102.5)" stroke="#3a3a3a" stroke-width="1.1" fill="none"><circle cx="6.5" cy="6.3" r="5.8"/><circle cx="6.5" cy="6.3" r="2.4" fill="#3a3a3a" stroke="none"/></g>
<g transform="translate(434,102.5)" stroke="#3a3a3a" stroke-width="1.05" fill="none"><rect x="0.6" y="0.6" width="12" height="9.5"/><rect x="2.5" y="4" width="3.5" height="3.5" fill="#3a3a3a" stroke="none"/><path d="M7.5 3.5 H11 M7.5 6 H10"/><path d="M7 12 L12.5 6.5" stroke="#2aa84a" stroke-width="2.2"/></g>
<rect x="458.8" y="101" width="1" height="1" fill="#c4c4c4"/><rect x="461.3" y="101" width="1" height="1" fill="#d0d0d0"/>
<rect x="458.8" y="103.3" width="1" height="1" fill="#c4c4c4"/><rect x="461.3" y="103.3" width="1" height="1" fill="#d0d0d0"/>
<rect x="458.8" y="105.6" width="1" height="1" fill="#c4c4c4"/><rect x="461.3" y="105.6" width="1" height="1" fill="#d0d0d0"/>
<rect x="458.8" y="107.89999999999999" width="1" height="1" fill="#c4c4c4"/><rect x="461.3" y="107.89999999999999" width="1" height="1" fill="#d0d0d0"/>
<rect x="458.8" y="110.19999999999999" width="1" height="1" fill="#c4c4c4"/><rect x="461.3" y="110.19999999999999" width="1" height="1" fill="#d0d0d0"/>
<rect x="458.8" y="112.49999999999999" width="1" height="1" fill="#c4c4c4"/><rect x="461.3" y="112.49999999999999" width="1" height="1" fill="#d0d0d0"/>
<rect x="458.8" y="114.79999999999998" width="1" height="1" fill="#c4c4c4"/><rect x="461.3" y="114.79999999999998" width="1" height="1" fill="#d0d0d0"/>
<g transform="translate(470,102.5)" stroke="#3a3a3a" stroke-width="1" fill="none"><path d="M0.5 5.5 L3 0 L5.5 5.5 M1.5 3.8 H4.5" stroke="#e2453c" stroke-width="1.3"/><path d="M0 7.5 H12 M0 9.5 H12 M0 11.5 H9 M7 0.8 H12 M7 3 H12 M7 5.2 H12" stroke="#666"/></g>
<g transform="translate(495,102.5)" stroke="#3a3a3a" stroke-width="1.1" fill="none"><path d="M0 1 V0.6 H8.5 V1 M4.25 0.6 V10 M2.5 10 H6" stroke-width="1.3"/><path d="M9 10 H13 M11 8 V12"/></g>
<g transform="translate(520.9,102.5)" stroke="#3a3a3a" stroke-width="1.1" fill="none"><path d="M0.6 11.5 V0.6 H11.5 V7"/><circle cx="3.5" cy="3.5" r="1.2" fill="#3a3a3a"/><path d="M1 11.5 L5 7 L7 9 L9 6.5 V11.5Z" fill="#3a3a3a"/><path d="M10 10 H13.5 M11.8 8.2 V11.8"/></g>
<line x1="543.5" y1="101" x2="543.5" y2="116" stroke="#d6d6d6" stroke-width="1"/>
<g transform="translate(550.5,102.5)" stroke="#3a3a3a" stroke-width="1" fill="none"><path d="M2 10.2 L11.5 1.8"/><rect x="0.5" y="9" width="2.6" height="2.6" /><rect x="10.5" y="0.5" width="2.6" height="2.6"/></g>
<g transform="translate(575.7,102.5)" stroke="#3a3a3a" stroke-width="1" fill="none"><rect x="1.5" y="1.5" width="10.5" height="10"/><rect x="0.2" y="0.2" width="2.6" height="2.6" fill="#fff"/><rect x="10.7" y="0.2" width="2.6" height="2.6" fill="#fff"/><rect x="0.2" y="10.2" width="2.6" height="2.6" fill="#fff"/><rect x="10.7" y="10.2" width="2.6" height="2.6" fill="#fff"/></g>
<g transform="translate(599.9,102.5)" stroke="#3a3a3a" stroke-width="1" fill="none"><path d="M7 1.5 L12.5 6.3 L7 11 L1.5 6.3Z" /><rect x="5.7" y="0" width="2.6" height="2.6" fill="#fff"/><rect x="11.5" y="5" width="2.6" height="2.6" fill="#fff"/><rect x="5.7" y="10" width="2.6" height="2.6" fill="#fff"/><rect x="0" y="5" width="2.6" height="2.6" fill="#fff"/></g>
<g transform="translate(625.6,102.5)" stroke="#3a3a3a" stroke-width="1.1" fill="none"><path d="M1 12 L1.6 9 L9.5 1 L12 3.5 L4 11.5Z M8 2.5 L10.5 5"/></g>
<g transform="translate(649.4,103)" stroke="#3a3a3a" stroke-width="1" fill="none"><path d="M0 8.9 H15.4" stroke="#a0a0a0" stroke-width="1.6"/><path d="M5.5 10.5 C3 8 2.5 0.5 5 0.3 C8 0 7.5 6 6 9 C5 11 3.5 10.5 4 9 C4.5 7 7 5.5 8.5 6.5 C9.5 5 10.5 5.5 11 6 C12 5 12.5 5.5 13.5 6.5"/><rect x="1" y="5.5" width="1.6" height="1.6" fill="#3a3a3a" stroke="none"/></g>
<path d="M662.5 116 H668.0999999999999 L665.3 119Z" fill="#3a3a3a"/>
<rect x="686.3" y="101" width="1" height="1" fill="#c4c4c4"/><rect x="688.8" y="101" width="1" height="1" fill="#d0d0d0"/>
<rect x="686.3" y="103.3" width="1" height="1" fill="#c4c4c4"/><rect x="688.8" y="103.3" width="1" height="1" fill="#d0d0d0"/>
<rect x="686.3" y="105.6" width="1" height="1" fill="#c4c4c4"/><rect x="688.8" y="105.6" width="1" height="1" fill="#d0d0d0"/>
<rect x="686.3" y="107.89999999999999" width="1" height="1" fill="#c4c4c4"/><rect x="688.8" y="107.89999999999999" width="1" height="1" fill="#d0d0d0"/>
<rect x="686.3" y="110.19999999999999" width="1" height="1" fill="#c4c4c4"/><rect x="688.8" y="110.19999999999999" width="1" height="1" fill="#d0d0d0"/>
<rect x="686.3" y="112.49999999999999" width="1" height="1" fill="#c4c4c4"/><rect x="688.8" y="112.49999999999999" width="1" height="1" fill="#d0d0d0"/>
<rect x="686.3" y="114.79999999999998" width="1" height="1" fill="#c4c4c4"/><rect x="688.8" y="114.79999999999998" width="1" height="1" fill="#d0d0d0"/>
<g transform="translate(698.8,102.5)" stroke="#3a3a3a" stroke-width="1.2" fill="none"><path d="M3.5 7.5 L9 2 L11 4 L5.5 9.5Z" fill="#3a3a3a"/><path d="M0 11.8 H1.5 M3 11.8 H4.5 M6 11.8 H7.5"/></g>
<g transform="translate(722.3,102.5)" stroke="#3a3a3a" stroke-width="1.1" fill="none"><circle cx="5" cy="5" r="4.3"/><path d="M8 8 L12 12 M0.5 11.8 H2 M3.5 11.8 H5 M6.5 11.8 H8"/></g>
<g transform="translate(746.5,102.5)" stroke="#3a3a3a" stroke-width="1.1" fill="none"><path d="M0.5 6 L4 9 L12.5 0.8 M0.5 11.8 H2 M3.5 11.8 H5 M6.5 11.8 H8"/></g>
<rect x="36.7" y="130" width="1" height="1" fill="#c4c4c4"/><rect x="39.2" y="130" width="1" height="1" fill="#d0d0d0"/>
<rect x="36.7" y="132.3" width="1" height="1" fill="#c4c4c4"/><rect x="39.2" y="132.3" width="1" height="1" fill="#d0d0d0"/>
<rect x="36.7" y="134.60000000000002" width="1" height="1" fill="#c4c4c4"/><rect x="39.2" y="134.60000000000002" width="1" height="1" fill="#d0d0d0"/>
<rect x="36.7" y="136.90000000000003" width="1" height="1" fill="#c4c4c4"/><rect x="39.2" y="136.90000000000003" width="1" height="1" fill="#d0d0d0"/>
<rect x="36.7" y="139.20000000000005" width="1" height="1" fill="#c4c4c4"/><rect x="39.2" y="139.20000000000005" width="1" height="1" fill="#d0d0d0"/>
<rect x="36.7" y="141.50000000000006" width="1" height="1" fill="#c4c4c4"/><rect x="39.2" y="141.50000000000006" width="1" height="1" fill="#d0d0d0"/>
<rect x="36.7" y="143.80000000000007" width="1" height="1" fill="#c4c4c4"/><rect x="39.2" y="143.80000000000007" width="1" height="1" fill="#d0d0d0"/>
<g transform="translate(48.9,132)" stroke="#e2453c" stroke-width="1.2" fill="none"><path d="M0.6 0.6 H13 V8.6 H4.5 L2 11 V8.6 H0.6Z" /><path d="M10 10.8 H14 M12 8.8 V12.8" stroke-width="1.5"/></g>
<g transform="translate(73,131.5)" stroke="#3a3a3a" stroke-width="1.1" fill="none"><path d="M3 12 L11.5 3.5 C13 2 11.5 0.2 10 1.6 L2 9.6 C1.2 10.4 2 11.4 2.8 10.6 L10 3.4"/><path d="M1.6 12.2 C0 11 0.5 9.5 1.5 8.5"/></g>
<g transform="translate(99.8,132)" stroke="#3a3a3a" stroke-width="1.1" fill="none"><path d="M2 0 V6 C2 9.5 8 9.5 8 6 V0" stroke-width="2.1"/><path d="M0 12.5 H10.3"/></g>
<path d="M118.5 136.3 H124.1 L121.3 139.3Z" fill="#3a3a3a"/>
<g transform="translate(132,132)" stroke="#3a3a3a" stroke-width="1.1" fill="none"><path d="M1 11.5 L12 1"/><circle cx="1" cy="11.5" r="1.1" fill="#3a3a3a"/><circle cx="12" cy="1" r="1.1" fill="#3a3a3a"/></g>
<path d="M151.79999999999998 136.3 H157.4 L154.6 139.3Z" fill="#3a3a3a"/>
<rect x="160.8" y="127.2" width="23.2" height="22.2" rx="2" fill="#dcdcdc" stroke="#c9c9c9"/>
<rect x="185.2" y="127.2" width="8.4" height="22.2" rx="2" fill="#dcdcdc" stroke="#c9c9c9"/>
<path d="M186.6 136.8 H192.20000000000002 L189.4 139.8Z" fill="#3a3a3a"/>
<g transform="translate(165.8,132)" stroke="#e2453c" stroke-width="1.2" fill="none"><path d="M1.5 11 V1.3 H11.5" stroke-width="1.1"/><rect x="0.3" y="0.2" width="2.3" height="2.3" fill="#e2453c" stroke="none"/><rect x="10.3" y="0.2" width="2.3" height="2.3" fill="#e2453c" stroke="none"/><rect x="0.3" y="10" width="2.3" height="2.3" fill="#e2453c" stroke="none"/></g>
<g transform="translate(199.7,131.5)" stroke="#555" stroke-width="1" fill="none"><rect x="0.6" y="0.6" width="11.8" height="11.6" stroke="#555"/><path d="M3 3.2 H10 M6.5 3.2 V10" stroke="#f07a3a" stroke-width="2"/><path d="M11 11 H14 M12.5 9.5 V12.5"/></g>
<g transform="translate(224.4,132)" stroke="#3a3a3a" stroke-width="1" fill="none"><path d="M2 5 V1 L0.5 2.5 M2 1 L3.5 2.5 M2 5 H5"/><rect x="5.5" y="3" width="9" height="8.5"/><path d="M7.5 5 H12.5 M10 5 V10" stroke-width="1.6"/></g>
<g transform="translate(248.9,131.5)" stroke="#3a3a3a" stroke-width="1.05" fill="none"><path d="M11.5 7 V0.6 H0.6 V11.5 H8"/><circle cx="6.2" cy="4" r="1.8"/><path d="M3 10 C3 7 9 7 9 10"/><path d="M9.5 9.5 H13 M11.2 7.8 V11.2"/></g>
<path d="M261.8 144.5 H267.40000000000003 L264.6 147.5Z" fill="#3a3a3a"/>
<g transform="translate(274.7,131.5)" stroke="#3a3a3a" stroke-width="1.1" fill="none"><rect x="0.6" y="0.6" width="5" height="5"/><rect x="7" y="0" width="5.6" height="5.6" fill="#3a3a3a" stroke="none"/><rect x="0" y="7" width="5.6" height="5.6" fill="#3a3a3a" stroke="none"/><rect x="7.6" y="7.6" width="5" height="5"/></g>
<path d="M286.4 144.5 H292.0 L289.2 147.5Z" fill="#3a3a3a"/>
<rect x="299.9" y="130" width="1" height="1" fill="#c4c4c4"/><rect x="302.4" y="130" width="1" height="1" fill="#d0d0d0"/>
<rect x="299.9" y="132.3" width="1" height="1" fill="#c4c4c4"/><rect x="302.4" y="132.3" width="1" height="1" fill="#d0d0d0"/>
<rect x="299.9" y="134.60000000000002" width="1" height="1" fill="#c4c4c4"/><rect x="302.4" y="134.60000000000002" width="1" height="1" fill="#d0d0d0"/>
<rect x="299.9" y="136.90000000000003" width="1" height="1" fill="#c4c4c4"/><rect x="302.4" y="136.90000000000003" width="1" height="1" fill="#d0d0d0"/>
<rect x="299.9" y="139.20000000000005" width="1" height="1" fill="#c4c4c4"/><rect x="302.4" y="139.20000000000005" width="1" height="1" fill="#d0d0d0"/>
<rect x="299.9" y="141.50000000000006" width="1" height="1" fill="#c4c4c4"/><rect x="302.4" y="141.50000000000006" width="1" height="1" fill="#d0d0d0"/>
<rect x="299.9" y="143.80000000000007" width="1" height="1" fill="#c4c4c4"/><rect x="302.4" y="143.80000000000007" width="1" height="1" fill="#d0d0d0"/>
<g transform="translate(314.5,132)" stroke="#3a3a3a" stroke-width="1.3" fill="none"><path d="M7 0 L0.8 6.3 L7 12.6"/></g>
<g transform="translate(339.6,132)" stroke="#9c9c9c" stroke-width="1.3" fill="none"><path d="M0.6 0 L6.8 6.3 L0.6 12.6"/></g>
<g transform="translate(361.9,134.5)" stroke="#3a3a3a" stroke-width="1.3" fill="none"><path d="M0 7 L6.5 0.7 L13 7"/></g>
<g transform="translate(386.5,134.5)" stroke="#3a3a3a" stroke-width="1.3" fill="none"><path d="M0 0.7 L6.5 7 L13 0.7"/></g>
<rect x="406.5" y="129" width="34.5" height="17" rx="2" fill="#fff" stroke="#bdbdbd"/>
<rect x="480.4" y="130" width="1" height="1" fill="#c4c4c4"/><rect x="482.9" y="130" width="1" height="1" fill="#d0d0d0"/>
<rect x="480.4" y="132.3" width="1" height="1" fill="#c4c4c4"/><rect x="482.9" y="132.3" width="1" height="1" fill="#d0d0d0"/>
<rect x="480.4" y="134.60000000000002" width="1" height="1" fill="#c4c4c4"/><rect x="482.9" y="134.60000000000002" width="1" height="1" fill="#d0d0d0"/>
<rect x="480.4" y="136.90000000000003" width="1" height="1" fill="#c4c4c4"/><rect x="482.9" y="136.90000000000003" width="1" height="1" fill="#d0d0d0"/>
<rect x="480.4" y="139.20000000000005" width="1" height="1" fill="#c4c4c4"/><rect x="482.9" y="139.20000000000005" width="1" height="1" fill="#d0d0d0"/>
<rect x="480.4" y="141.50000000000006" width="1" height="1" fill="#c4c4c4"/><rect x="482.9" y="141.50000000000006" width="1" height="1" fill="#d0d0d0"/>
<rect x="480.4" y="143.80000000000007" width="1" height="1" fill="#c4c4c4"/><rect x="482.9" y="143.80000000000007" width="1" height="1" fill="#d0d0d0"/>
<g transform="translate(492,131.5)" stroke="#3a3a3a" stroke-width="1.1" fill="none"><path d="M0.6 4 V0.6 H3.5 M0.6 8.5 V12 M9 12 H12 V8.5"/><rect x="7.6" y="0.6" width="4.4" height="4.4"/><path d="M0.5 12 V7 L2 8.5 L5.5 5 L7.5 7 L4 10.5 L5.5 12Z" fill="#3a3a3a" stroke="none"/></g>
<g transform="translate(518,131.5)" stroke="#3a3a3a" stroke-width="1.1" fill="none"><rect x="1.6" y="1.6" width="9" height="9"/><path d="M0 0.6 H2 M0.6 0 V2 M10.2 0.6 H12.2 M11.6 0 V2 M0 11.6 H2 M0.6 10.2 V12.2 M10.2 11.6 H12.2 M11.6 10.2 V12.2"/></g>
<rect x="537.5" y="128.5" width="50" height="19" rx="2" fill="#fff" stroke="#bdbdbd"/>
<rect x="572.5" y="129" width="14.5" height="18" fill="#f1f1f1"/>
<path d="M576.7 137.2 H582.3 L579.5 140.2Z" fill="#3a3a3a"/>
<g transform="translate(594,131.5)" stroke="#3a3a3a" stroke-width="1.1" fill="none"><path d="M0.6 4 V0.6 H4 M12 8.5 V12 H9"/><rect x="0.6" y="7.6" width="4.4" height="4.4"/><path d="M13 0 V5 L11.5 3.5 L8 7 L6 5 L9.5 1.5 L8 0Z" fill="#3a3a3a" stroke="none"/></g>
<g transform="translate(620,131.5)" stroke="#3a3a3a" stroke-width="1.1" fill="none"><rect x="2.5" y="2.5" width="7.5" height="7.5"/><path d="M0.6 3 V0.6 H3 M9.5 0.6 H12 V3 M0.6 9.5 V12 H3 M9.5 12 H12 V9.5 M6.2 0 V1.5 M6.2 11 V12.5 M0 6.2 H1.5 M11 6.2 H12.5"/></g>
<g transform="translate(645,131.5)" stroke="#3a3a3a" stroke-width="1.1" fill="none"><rect x="2.5" y="2.5" width="7.5" height="7.5"/><path d="M0.6 3 V0.6 H3 M9.5 0.6 H12 V3 M0.6 9.5 V12 H3 M9.5 12 H12 V9.5 M0 6.2 H1.5 M11 6.2 H12.5"/></g>
<line x1="665.4" y1="130" x2="665.4" y2="145" stroke="#d6d6d6" stroke-width="1"/>
<rect x="669.8" y="127.2" width="24" height="21.7" rx="2" fill="#dcdcdc" stroke="#c9c9c9"/>
<g transform="translate(676.5,132)" stroke="#666" stroke-width="1.4" fill="none"><path d="M1 0 V12.5 M10 0 V12.5 M1 6.3 H10"/></g>
<line x1="697" y1="130" x2="697" y2="145" stroke="#d6d6d6" stroke-width="1"/>
<g transform="translate(705,131.5)" stroke="#3a3a3a" stroke-width="1" fill="none"><path d="M5.5 5.5 L9 9 L5.5 12.5 L2 9Z" stroke-width="1.2"/><path d="M7 2 H10 C13 2 14 5 13 7 M11 9.5 A1 1 0 0 1 10 10.5" stroke-dasharray="1.2,1.3" stroke="#888"/><path d="M8.5 0 L6.5 2 L8.5 4"/></g>
<g transform="translate(729,131.5)" stroke="#3a3a3a" stroke-width="1" fill="none"><path d="M8.5 5.5 L12 9 L8.5 12.5 L5 9Z" stroke-width="1.2"/><path d="M7 2 H4 C1 2 0 5 1 7 M3 9.5 A1 1 0 0 0 4 10.5" stroke-dasharray="1.2,1.3" stroke="#888"/><path d="M5.5 0 L7.5 2 L5.5 4"/></g>
<g transform="translate(943,35)" stroke="#333" stroke-width="1.3" fill="none"><path d="M0 0 L4 4 L8 0"/></g>
<g transform="translate(960.2,34)" stroke="#333" stroke-width="1.3" fill="none"><path d="M0 4.5 L4 0.5 L8 4.5"/></g>
<g transform="translate(978,33.5)" stroke="#333" stroke-width="1.3" fill="none"><path d="M0 0 L6.5 6.5 M6.5 0 L0 6.5"/></g>
<g transform="translate(41.5,170.5)" stroke="#555" stroke-width="1.1" fill="none"><path d="M0.5 0.5 H8 V7.5 L5.5 10.5 H0.5Z"/><path d="M8 7.5 H5.5 V10.5Z" fill="#3a3a3a"/></g>
<g transform="translate(43,208)" stroke="#555" stroke-width="1.1" fill="none"><path d="M0.5 0.5 H6.5 V11.3 C5 9.8 2 9.8 0.5 11.3Z"/></g>
<g transform="translate(43,244.5)" stroke="#666" stroke-width="1.1" fill="none"><path d="M1 4 V9 C1 11 6 11 6 9 V2.5 C6 0 2.5 0 2.5 2.5 V8"/></g>
<g transform="translate(40.5,283)" stroke="#555" stroke-width="1.1" fill="none"><circle cx="4.5" cy="4.5" r="3.8"/><path d="M7.3 7.3 L11 11"/></g>
<g transform="translate(40.5,320.5)" stroke="#555" stroke-width="1" fill="none"><rect x="0.5" y="0.5" width="11" height="10" fill="#f6f6f6"/><rect x="0.5" y="0.5" width="11" height="2" fill="#555"/><rect x="2" y="4" width="3" height="5" fill="#888" stroke="none"/><path d="M6.5 5 H10 M6.5 8 H10"/></g>
<g transform="translate(40.5,359)" stroke="#555" stroke-width="1" fill="none"><rect x="0.5" y="0.5" width="12" height="8" fill="#f6f6f6"/><rect x="2" y="2.5" width="3" height="3" fill="#555" stroke="none"/><path d="M6.5 3 H10.5 M6.5 5.5 H10"/></g>
<g transform="translate(41,396)" stroke="#555" stroke-width="1.1" fill="none"><rect x="0.5" y="0.5" width="7" height="8" fill="#f6f6f6"/><rect x="3" y="3" width="7" height="8.5" fill="#f6f6f6"/></g>
<defs><linearGradient id="lg" x1="0" y1="0" x2="0" y2="1"><stop offset="0" stop-color="#e0262a"/><stop offset="1" stop-color="#c42a2e"/></linearGradient></defs>
<rect x="36" y="29.7" width="14" height="14" rx="1.5" fill="url(#lg)"/>
<path d="M37 40.8 L38.8 36.2 C39.5 34.5 41.2 34.5 41.8 36 L42.6 38 C43 37 44.5 36.6 45.2 38 L46.9 40.8 H44.6 L43.8 39.4 L42.9 40.8 H41.2 L40.3 38.2 L39.5 40.8Z" fill="#fff"/>
<rect x="44.5" y="31" width="4" height="1.2" fill="#f3a0a0"/>
<rect x="989" y="741" width="1" height="1" fill="#b0b0b0"/>
<rect x="987" y="743" width="1" height="1" fill="#b0b0b0"/>
<rect x="989" y="743" width="1" height="1" fill="#b0b0b0"/>
<rect x="985" y="745" width="1" height="1" fill="#b0b0b0"/>
<rect x="987" y="745" width="1" height="1" fill="#b0b0b0"/>
<rect x="989" y="745" width="1" height="1" fill="#b0b0b0"/>
</svg>
<div class="lbl" style="left:410px;top:132px;font-size:10.6px">7</div>
<div class="lbl" style="left:446.7px;top:132px;font-size:10.6px">/ 14</div>
<div class="lbl" style="left:540.2px;top:132px;font-size:10.6px">255%</div>
</body></html>
